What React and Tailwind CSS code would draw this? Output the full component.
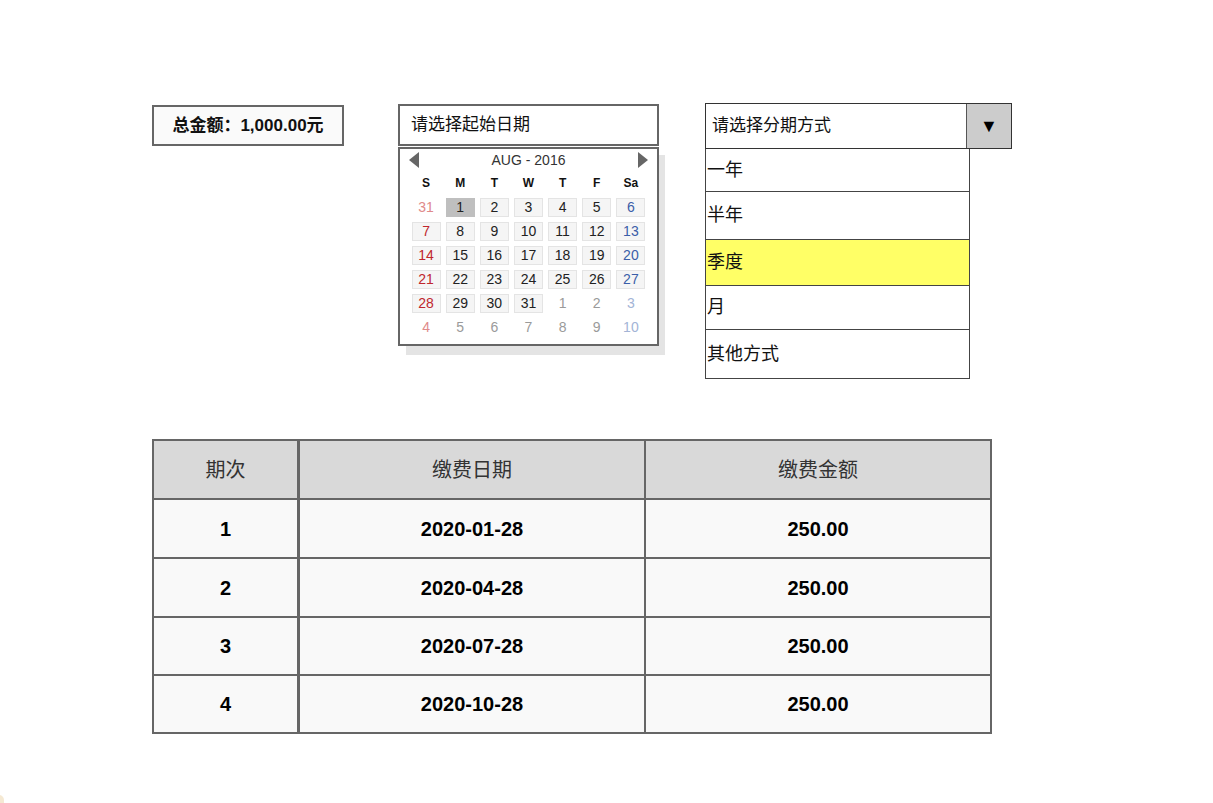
import React from 'react';

const FONT = { fontFamily: '"Liberation Sans", Arial, "Noto Sans CJK SC", sans-serif' };

const weeks = [
  [31, 1, 2, 3, 4, 5, 6],
  [7, 8, 9, 10, 11, 12, 13],
  [14, 15, 16, 17, 18, 19, 20],
  [21, 22, 23, 24, 25, 26, 27],
  [28, 29, 30, 31, 1, 2, 3],
  [4, 5, 6, 7, 8, 9, 10],
];

function dayCell(day, row, col) {
  const other = (row === 0 && day > 20) || (row >= 4 && day < 15);
  let color = 'text-[#222]';
  if (col === 0) color = other ? 'text-[#e08a8a]' : 'text-[#c0272d]';
  else if (col === 6) color = other ? 'text-[#a3b4d6]' : 'text-[#3b5ea8]';
  else if (other) color = 'text-[#9a9a9a]';
  const selected = row === 0 && day === 1;
  const box = other
    ? 'border border-transparent'
    : selected
    ? 'bg-[#bfbfbf] border border-[#bfbfbf]'
    : 'bg-[#f5f5f5] border border-[#e4e4e4]';
  return (
    <div key={`${row}-${col}`} className="flex items-center justify-center h-[24px]">
      <div className={`w-[29px] h-[19px] flex items-center justify-center text-[14px] ${box} ${color}`}>{day}</div>
    </div>
  );
}

function Calendar() {
  return (
    <div className="relative w-[261px]">
      <div className="h-[42px] border-2 border-[#666] bg-white flex items-center px-[11px] text-[17px] text-[#111]">
        请选择起始日期
      </div>
      <div className="relative mt-[1px]">
        <div className="absolute left-[8px] top-[8px] w-[259px] h-[200px] bg-[#e4e4e4]" />
        <div className="relative border-2 border-[#666] bg-white px-[9px] pb-[5px]">
          <div className="h-[22px] flex items-center justify-between">
            <svg width="10" height="16" viewBox="0 0 10 16"><polygon points="10,0 10,16 0,8" fill="#666" /></svg>
            <span className="text-[14px] text-[#333]">AUG - 2016</span>
            <svg width="10" height="16" viewBox="0 0 10 16"><polygon points="0,0 0,16 10,8" fill="#666" /></svg>
          </div>
          <div className="grid grid-cols-7 h-[24px] items-center text-[12px] font-bold text-[#111] text-center">
            {['S', 'M', 'T', 'W', 'T', 'F', 'Sa'].map((d, i) => (
              <div key={i}>{d}</div>
            ))}
          </div>
          <div className="grid grid-cols-7">
            {weeks.map((w, r) => w.map((d, c) => dayCell(d, r, c)))}
          </div>
        </div>
      </div>
    </div>
  );
}

function Dropdown() {
  const options = [
    { t: '一年', h: 'h-[43px]' },
    { t: '半年', h: 'h-[48px]' },
    { t: '季度', h: 'h-[46px]', hl: true },
    { t: '月', h: 'h-[44px]' },
    { t: '其他方式', h: 'h-[49px]' },
  ];
  return (
    <div className="w-[307px]">
      <div className="h-[46px] flex border border-[#333] bg-white">
        <div className="flex-1 flex items-center px-[6px] text-[17px] text-[#111]">请选择分期方式</div>
        <div className="w-[45px] bg-[#cccccc] border-l border-[#555] flex items-center justify-center text-[18px] text-black">
          ▼
        </div>
      </div>
      <div className="w-[265px] border-x border-[#444]">
        {options.map((o, i) => (
          <div
            key={i}
            className={`${o.h} flex items-center px-[1px] text-[18px] text-[#111] border-b border-[#444] ${o.hl ? 'bg-[#ffff66]' : 'bg-white'}`}
          >
            {o.t}
          </div>
        ))}
      </div>
    </div>
  );
}

function Schedule() {
  const rows = [
    ['1', '2020-01-28', '250.00', 'h-[59px]'],
    ['2', '2020-04-28', '250.00', 'h-[59px]'],
    ['3', '2020-07-28', '250.00', 'h-[58px]'],
    ['4', '2020-10-28', '250.00', 'h-[58px]'],
  ];
  const cell = 'flex items-center justify-center border-r-2 border-b-2 border-[#666]';
  return (
    <div className="w-[840px] grid grid-cols-[146px_346px_346px] border-l-2 border-t-2 border-[#666]">
      <div className={`${cell} h-[59px] bg-[#d9d9d9] text-[20px] text-[#333] border-r-[3px]`}>期次</div>
      <div className={`${cell} h-[59px] bg-[#d9d9d9] text-[20px] text-[#333]`}>缴费日期</div>
      <div className={`${cell} h-[59px] bg-[#d9d9d9] text-[20px] text-[#333]`}>缴费金额</div>
      {rows.map((r, i) => (
        <React.Fragment key={i}>
          <div className={`${cell} ${r[3]} bg-[#f9f9f9] text-[20px] font-bold text-black border-r-[3px]`}>{r[0]}</div>
          <div className={`${cell} ${r[3]} bg-[#f9f9f9] text-[20px] font-bold text-black`}>{r[1]}</div>
          <div className={`${cell} ${r[3]} bg-[#f9f9f9] text-[20px] font-bold text-black`}>{r[2]}</div>
        </React.Fragment>
      ))}
    </div>
  );
}

export default function App() {
  return (
    <div className="w-[1213px] h-[803px] bg-white relative overflow-hidden" style={FONT}>
      <div className="pl-[152px] pt-[103px]">
        <div className="flex items-start h-[276px]">
          <div className="mt-[2px] w-[192px] h-[41px] border-2 border-[#666] bg-[#fafafa] flex items-center justify-center text-[17px] font-bold text-[#111]">
            总金额：1,000.00元
          </div>
          <div className="ml-[54px] mt-[1px]">
            <Calendar />
          </div>
          <div className="ml-[46px]">
            <Dropdown />
          </div>
        </div>
        <div className="mt-[60px]">
          <Schedule />
        </div>
      </div>
      <div className="absolute left-[-6px] bottom-[-6px] w-[10px] h-[14px] rounded-full bg-[#f1dfc0] opacity-70" />
    </div>
  );
}
